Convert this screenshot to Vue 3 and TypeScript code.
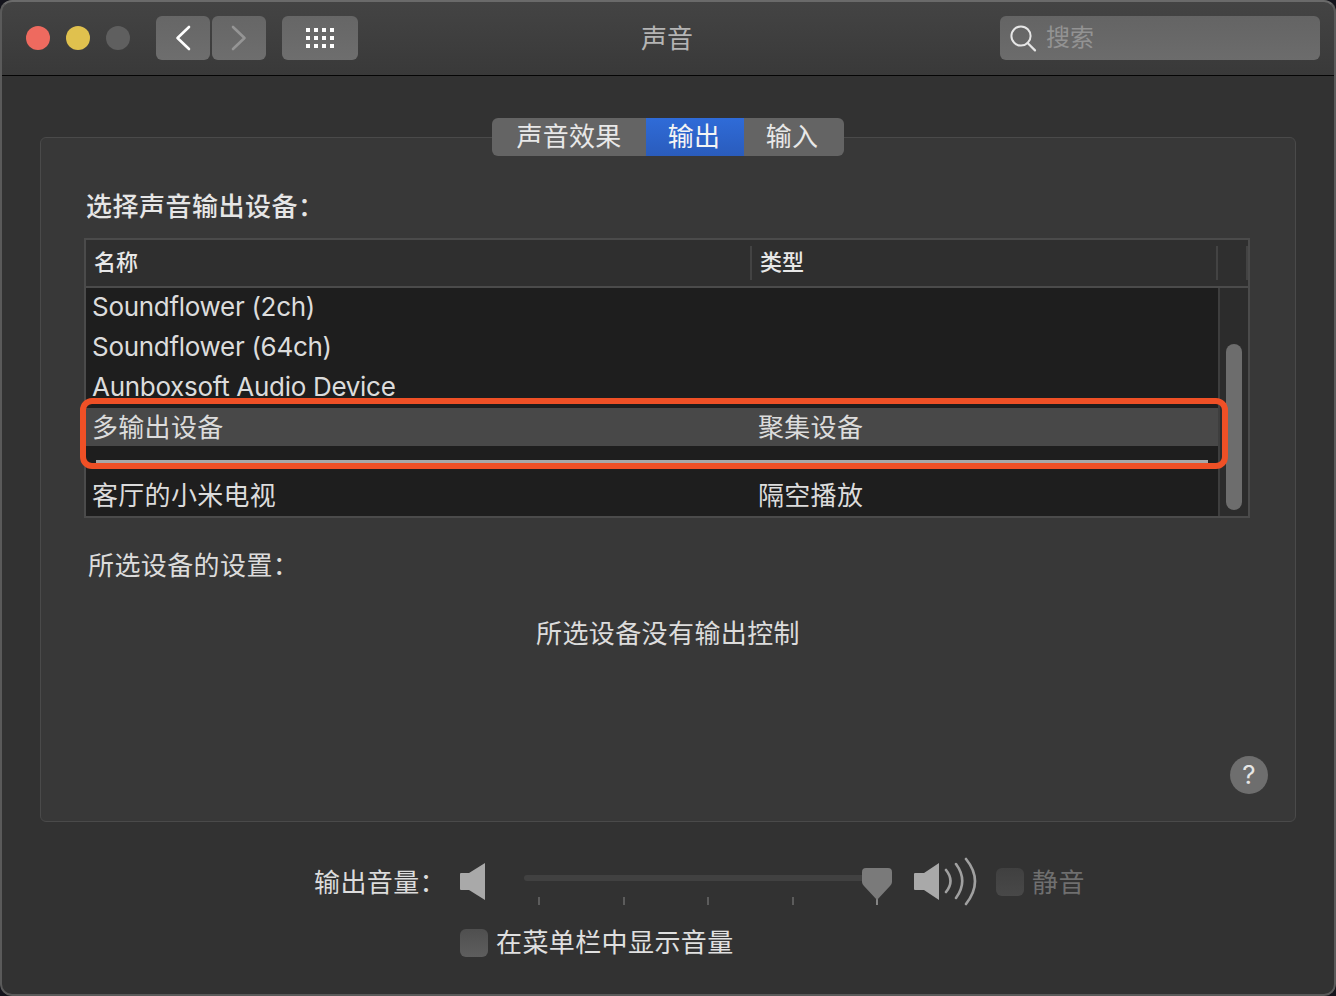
<script setup lang="ts">
const rows = ['Soundflower (2ch)', 'Soundflower (64ch)', 'Aunboxsoft Audio Device']
const ticks = [0, 1, 2, 3, 4]
const dots = Array.from({ length: 12 })
</script>

<template>
  <div class="window">
    <!-- 标题栏 -->
    <header class="titlebar">
      <div class="lights">
        <span class="light red"></span>
        <span class="light yellow"></span>
        <span class="light gray"></span>
      </div>
      <div class="nav">
        <button class="tool-btn nav-btn">
          <svg width="16" height="26" viewBox="0 0 16 26"><path d="M14 2 L2.500 13 L14 24" fill="none" stroke="#fff" stroke-width="2.6" stroke-linecap="round" stroke-linejoin="round" /></svg>
        </button>
        <button class="tool-btn nav-btn">
          <svg width="16" height="26" viewBox="0 0 16 26"><path d="M2 2 L13.500 13 L2 24" fill="none" stroke="#959595" stroke-width="2.6" stroke-linecap="round" stroke-linejoin="round" /></svg>
        </button>
      </div>
      <button class="tool-btn grid-btn">
        <span class="dots"><i v-for="(_, i) in dots" :key="i"></i></span>
      </button>
      <div class="title">声音</div>
      <div class="search">
        <svg width="28" height="28" viewBox="0 0 28 28"><circle cx="12" cy="12" r="9.6" fill="none" stroke="#e6e6e6" stroke-width="2" /><path d="M18.6 19 L26 26.4" stroke="#e6e6e6" stroke-width="2.2" stroke-linecap="round" /></svg>
        <span class="search-text">搜索</span>
      </div>
    </header>

    <main class="content">
      <section class="group">
        <div class="tabs">
          <span class="tab tab-first">声音效果</span>
          <span class="tab active">输出</span>
          <span class="tab tab-last">输入</span>
        </div>

        <h2 class="pick">选择声音输出设备：</h2>

        <div class="table">
          <div class="thead">
            <div class="th th-name">名称</div>
            <div class="th th-type">类型</div>
            <div class="th th-end"></div>
          </div>
          <div class="tbody">
            <div class="list">
              <div v-for="row in rows" :key="row" class="row latin">
                <span class="col-name">{{ row }}</span>
              </div>
              <div class="row selected">
                <span class="col-name">多输出设备</span>
                <span class="col-type">聚集设备</span>
              </div>
              <div class="divider-row"><div class="divider"></div></div>
              <div class="row last">
                <span class="col-name">客厅的小米电视</span>
                <span class="col-type">隔空播放</span>
              </div>
              <div class="mark"></div>
            </div>
            <div class="scroll"><div class="thumb"></div></div>
          </div>
        </div>

        <div class="settings">所选设备的设置：</div>
        <div class="no-control">所选设备没有输出控制</div>
        <div class="help-row"><span class="help">?</span></div>
      </section>

      <!-- 音量 -->
      <div class="volume">
        <span class="vol-label">输出音量：</span>
        <svg class="spk-low" width="26" height="37" viewBox="0 0 26 37"><path d="M0 11 Q0 10 1 10 H9 L25 0 V37 L9 27 H1 Q0 27 0 26 Z" fill="#a9a9a9" /></svg>
        <div class="slider">
          <div class="track"></div>
          <div class="ticks"><i v-for="t in ticks" :key="t"></i></div>
          <svg class="knob" width="30" height="32" viewBox="0 0 30 32"><path d="M4 0 H26 Q30 0 30 4 V14 Q30 16 28 18 L15 32 L2 18 Q0 16 0 14 V4 Q0 0 4 0 Z" fill="#7a7a7a" /></svg>
        </div>
        <svg class="spk-high" width="64" height="50" viewBox="0 0 64 50"><path d="M0 18 Q0 17 1 17 H10 L25 7 V44 L10 34 H1 Q0 34 0 33 Z" fill="#a9a9a9" /><path d="M32 14 Q41 25 32 36 M42 8 Q54.500 25 42 42 M52 3 Q70 25 52 48" fill="none" stroke="#a0a0a0" stroke-width="2.6" stroke-linecap="round" /></svg>
        <span class="check mute-box"></span>
        <span class="mute">静音</span>
      </div>
      <div class="menubar-row">
        <span class="check"></span>
        <span class="menubar-text">在菜单栏中显示音量</span>
      </div>
    </main>
  </div>
</template>

<style>
html, body {
  margin: 0;
  background: #14141c;
}
</style>

<style scoped>
* {
  box-sizing: border-box;
}

.window {
  width: 1336px;
  height: 996px;
  display: flex;
  flex-direction: column;
  background: #323232;
  border-radius: 12px;
  overflow: hidden;
  position: relative;
  font-family: Inter, "Noto Sans CJK SC", sans-serif;
  color: #e4e4e4;
}

/* 窗口外沿的亮边 */
.window::after {
  content: "";
  position: absolute;
  inset: 0;
  border: 2px solid #5a5a5a;
  border-top-color: #6a6a6a;
  border-radius: 12px;
  pointer-events: none;
}

.titlebar {
  height: 76px;
  flex: none;
  display: flex;
  align-items: flex-start;
  padding: 16px 16px 0 26px;
  background: linear-gradient(#444, #393939);
  border-bottom: 1px solid #050505;
}

.lights {
  display: flex;
  gap: 16px;
  margin-top: 10px;
}

.light {
  width: 24px;
  height: 24px;
  border-radius: 50%;
}

.red { background: #ee6a5f; }
.yellow { background: #e0c14e; }
.gray { background: #5f5f5f; }

.nav {
  display: flex;
  gap: 2px;
  margin-left: 26px;
}

.tool-btn {
  border: none;
  padding: 0;
  height: 44px;
  border-radius: 6px;
  background: linear-gradient(#666, #6e6e6e);
  display: flex;
  align-items: center;
  justify-content: center;
}

.nav-btn { width: 54px; }

.grid-btn {
  width: 76px;
  margin-left: 16px;
}

.dots {
  display: grid;
  grid-template-columns: repeat(4, 4px);
  grid-auto-rows: 4px;
  gap: 4px;
}

.dots i {
  background: #fff;
}

.title {
  flex: 1;
  text-align: center;
  font-size: 26px;
  line-height: 46px;
  color: #b4b4b4;
  margin-left: -24px;
}

.search {
  width: 320px;
  height: 44px;
  border-radius: 6px;
  background: linear-gradient(#646464, #6c6c6c);
  display: flex;
  align-items: center;
  padding-left: 9px;
  gap: 9px;
  font-size: 24px;
  color: #939393;
}

.search-text {
  line-height: 40px;
}

.content {
  flex: 1;
  display: flex;
  flex-direction: column;
  padding: 61px 40px 0;
}

.group {
  height: 685px;
  background: #383838;
  border: 1px solid #4a4a4a;
  border-radius: 6px;
  padding: 0 45px;
  display: flex;
  flex-direction: column;
}

.tabs {
  align-self: center;
  display: flex;
  height: 38px;
  margin-top: -20px;
  border-radius: 6px;
  overflow: hidden;
  background: #646464;
  font-size: 26px;
  line-height: 38px;
  letter-spacing: 0.2px;
  color: #e8e8e8;
}

.tab {
  text-align: center;
}

.tab-first { width: 154px; }
.tab.active {
  width: 98px;
  padding-right: 2px;
  background: linear-gradient(#2f6bd8, #2a5cbc);
  color: #f4f4f4;
}
.tab-last {
  width: 100px;
  padding-right: 4px;
}

.pick {
  margin: 33px 0 0;
  font-size: 26px;
  line-height: 36px;
  font-weight: 500;
  letter-spacing: 0.5px;
  color: #e6e6e6;
}

.table {
  margin-top: 13px;
  width: 1166px;
  height: 280px;
  margin-left: -2px;
  border: 2px solid #4b4b4b;
  display: flex;
  flex-direction: column;
  background: #1e1e1e;
}

.thead {
  height: 48px;
  flex: none;
  display: flex;
  align-items: center;
  background: #2f2f2f;
  border-bottom: 2px solid #4b4b4b;
  font-size: 22px;
  font-weight: 500;
  color: #e8e8e8;
}

.th {
  height: 34px;
  line-height: 32px;
  padding-left: 8px;
}

.th-name { width: 664px; }
.th-type {
  width: 466px;
  border-left: 2px solid #434343;
}
.th-end {
  flex: 1;
  border-left: 2px solid #434343;
  border-right: 2px solid #434343;
}

.tbody {
  flex: 1;
  display: flex;
  min-height: 0;
}

.list {
  flex: 1;
  position: relative;
}

.row {
  height: 40px;
  display: flex;
  align-items: center;
  padding-bottom: 4px;
  font-size: 26px;
  letter-spacing: 0.3px;
  color: #dcdcdc;
}

.row.latin {
  letter-spacing: -0.3px;
}

.row.last {
  height: 41px;
  padding-bottom: 5px;
}

.col-name {
  width: 672px;
  padding-left: 6px;
  white-space: nowrap;
}

.selected {
  height: 38px;
  background: #484848;
}

.divider-row {
  height: 29px;
  padding: 14px 10px 0;
}

.divider {
  height: 3px;
  background: #a8a8a8;
}

/* 红色标注框 */
.mark {
  position: absolute;
  left: -6px;
  right: -10px;
  top: 110px;
  height: 71px;
  border: 6px solid #ef5026;
  border-radius: 12px;
}

.scroll {
  width: 30px;
  flex: none;
  background: #2c2c2c;
  border-left: 2px solid #3e3e3e;
  padding: 56px 0 6px 6px;
}

.thumb {
  width: 16px;
  height: 166px;
  border-radius: 8px;
  background: #6d6d6d;
}

.settings {
  margin-top: 30px;
  margin-left: 2px;
  font-size: 26px;
  line-height: 36px;
  letter-spacing: 0.4px;
  color: #dcdcdc;
}

.no-control {
  margin-top: 32px;
  text-align: center;
  font-size: 26px;
  line-height: 36px;
  letter-spacing: 0.4px;
  color: #dcdcdc;
}

.help-row {
  display: flex;
  justify-content: flex-end;
  margin-top: 104px;
  margin-right: -18px;
}

.help {
  width: 38px;
  height: 38px;
  border-radius: 50%;
  background: #6e6e6e;
  color: #e6e6e6;
  text-align: center;
  font-size: 26px;
  line-height: 38px;
}

.volume {
  margin-top: 33px;
  height: 50px;
  display: flex;
  align-items: center;
  padding-left: 274px;
  color: #dcdcdc;
  font-size: 26px;
  letter-spacing: 0.4px;
}

.vol-label {
  width: 146px;
  white-space: nowrap;
}

.spk-low {
  flex: none;
  margin-top: 3px;
}

.slider {
  width: 370px;
  height: 50px;
  margin-left: 38px;
  position: relative;
}

.track {
  position: absolute;
  left: 0;
  right: 14px;
  top: 20px;
  height: 6px;
  border-radius: 3px;
  background: #414141;
}

.knob {
  position: absolute;
  left: 338px;
  top: 13px;
}

.ticks {
  display: flex;
  position: absolute;
  left: 14px;
  top: 42px;
}

.ticks i {
  width: 2px;
  height: 8px;
  background: #5c5c5c;
  margin-right: 82.5px;
}

.ticks i:last-child {
  height: 9px;
  margin-top: -1px;
  background: #858585;
}

.spk-high {
  margin-left: 20px;
  margin-top: 2px;
  flex: none;
}

.check {
  width: 28px;
  height: 28px;
  border-radius: 6px;
  background: linear-gradient(#4f4f4f, #5e5e5e);
  flex: none;
}

.mute-box {
  margin-left: 18px;
  margin-top: 4px;
  background: linear-gradient(#404040, #484848);
}

.mute {
  margin-left: 8px;
  color: #6f6f6f;
}

.menubar-row {
  margin-top: 20px;
  margin-left: 420px;
  display: flex;
  align-items: center;
  gap: 8px;
  font-size: 26px;
  line-height: 36px;
  letter-spacing: 0.4px;
  color: #e0e0e0;
}
</style>
